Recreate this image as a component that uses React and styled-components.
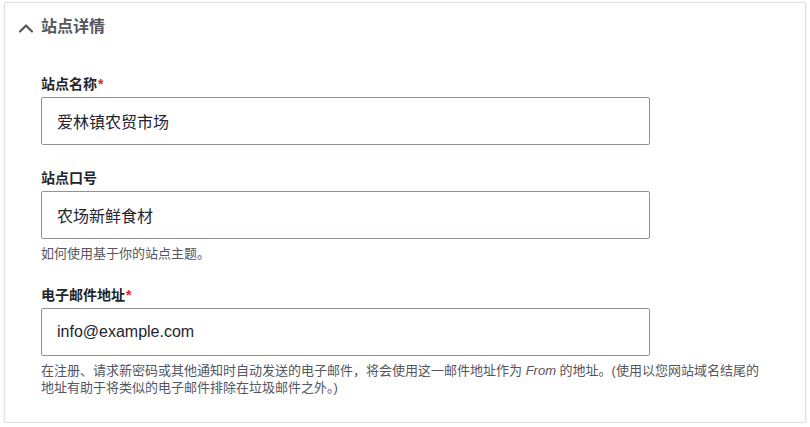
import React from "react";
import styled, { createGlobalStyle } from "styled-components";

const Global = createGlobalStyle`
  html, body { margin: 0; padding: 0; background: #fff; }
  body {
    font-family: "Liberation Sans", "Noto Sans CJK SC", sans-serif;
    color: #222330;
  }
  * { box-sizing: border-box; }
`;

const Page = styled.div`
  padding: 2px 4px 0 4px;
`;

const Card = styled.section`
  width: 802px;
  border: 1px solid #dedee4;
  border-radius: 2px;
  box-shadow: 0 1px 3px rgba(0, 0, 0, 0.08);
  background: #fff;
`;

const Summary = styled.div`
  display: flex;
  align-items: center;
  height: 48px;
  padding: 0 0 0 13px;
  gap: 7px;
  font-size: 16px;
  font-weight: 700;
  line-height: 24px;
  color: #55565b;
`;

const Chevron = styled.svg`
  width: 16px;
  height: 12px;
  flex: none;
  margin-top: 1px;
`;

const Content = styled.div`
  padding: 0 36px 26px 36px;
`;

const FormItem = styled.div`
  margin-top: 24px;
`;

const Label = styled.label`
  display: block;
  font-size: 14px;
  font-weight: 700;
  line-height: 18px;
  color: #232429;
  margin-bottom: 4px;
`;

const Required = styled.span`
  color: #dc2323;
  margin-left: 1px;
`;

const Input = styled.input`
  display: block;
  width: 609px;
  height: 48px;
  padding: 0 15px;
  font-family: "Liberation Sans", "Noto Sans CJK SC", sans-serif;
  font-size: 16px;
  color: #222330;
  border: 1px solid #8e929c;
  border-radius: 2px;
  background: #fff;
  outline: none;
`;

const Description = styled.div`
  margin-top: 6px;
  font-size: 13px;
  line-height: 17px;
  color: #545560;
  em { font-style: italic; }
`;

export default function App() {
  return (
    <Page>
      <Global />
      <Card>
        <Summary>
          <Chevron viewBox="0 0 16 12" fill="none">
            <path d="M2 9.5 L8 3.5 L14 9.5" stroke="#55565b" strokeWidth="2.2" strokeLinecap="round" strokeLinejoin="round" />
          </Chevron>
          站点详情
        </Summary>
        <Content>
          <FormItem>
            <Label>站点名称<Required>*</Required></Label>
            <Input defaultValue="爱林镇农贸市场" />
          </FormItem>
          <FormItem>
            <Label>站点口号</Label>
            <Input defaultValue="农场新鲜食材" />
            <Description>如何使用基于你的站点主题。</Description>
          </FormItem>
          <FormItem>
            <Label>电子邮件地址<Required>*</Required></Label>
            <Input defaultValue="info@example.com" />
            <Description>
              在注册、请求新密码或其他通知时自动发送的电子邮件，将会使用这一邮件地址作为 <em>From</em> 的地址。(使用以您网站域名结尾的地址有助于将类似的电子邮件排除在垃圾邮件之外。)
            </Description>
          </FormItem>
        </Content>
      </Card>
    </Page>
  );
}
